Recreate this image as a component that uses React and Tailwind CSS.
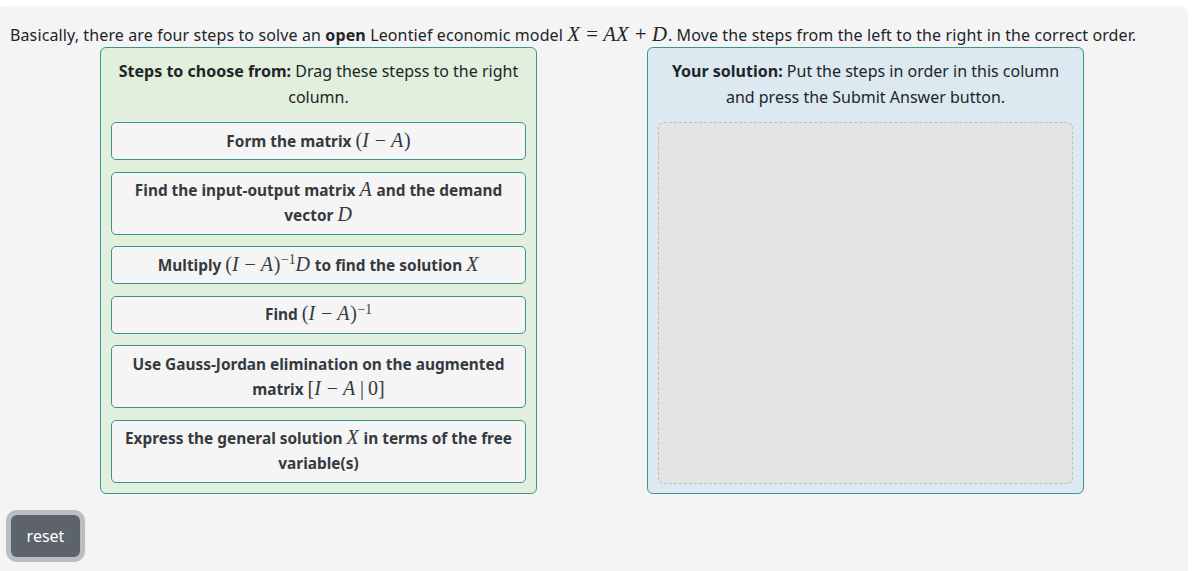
import React from 'react'

const serif = { fontFamily: '"Liberation Serif", "DejaVu Serif", serif' }

// katex-like inline math: italic letters, upright operators
const I = ({ children }) => <i className="italic pr-[0.04em]" style={serif}>{children}</i>
const R = ({ children, className = '' }) => <span className={`not-italic ${className}`} style={serif}>{children}</span>
const Math = ({ children }) => (
  <span className="text-[1.3em] font-normal whitespace-nowrap leading-none" style={serif}>{children}</span>
)
const Op = ({ children }) => <span className="mx-[0.25em]">{children}</span>
const Inv = () => <sup className="text-[0.68em] ml-[0.05em] -top-[0.45em]">−1</sup>

const IminusA = () => (
  <>
    <R>(</R><I>I</I><Op>−</Op><I>A</I><R>)</R>
  </>
)

const steps = [
  { id: 1, body: <>Form the matrix <Math><IminusA /></Math></> },
  { id: 2, body: <>Find the input-output matrix <Math><I>A</I></Math> and the demand vector <Math><I>D</I></Math></> },
  { id: 3, body: <>Multiply <Math><IminusA /><Inv /><I>D</I></Math> to find the solution <Math><I>X</I></Math></> },
  { id: 4, body: <>Find <Math><IminusA /><Inv /></Math></> },
  { id: 5, body: <>Use Gauss-Jordan elimination on the augmented matrix <Math><R>[</R><I>I</I><Op>−</Op><I>A</I><R className="mx-[0.2em]">|</R><R>0</R><R>]</R></Math></> },
  { id: 6, body: <>Express the general solution <Math><I>X</I></Math> in terms of the free variable(s)</> },
]

function StepCard({ children }) {
  return (
    <div className="rounded-[5px] border border-[#3a9592] bg-[#f5f5f5] px-3 py-[5.5px] text-center text-[15.4px] font-bold leading-[25px] text-[#343a40] cursor-move">
      {children}
    </div>
  )
}

export default function App() {
  return (
    <div className="min-h-screen bg-white text-[#212529]" style={{ fontFamily: '"Noto Sans", "Open Sans", sans-serif' }}>
      <div className="mt-[7px] mr-[12px] min-h-[564px] rounded-tr-lg bg-[#f4f4f4] shadow-[0_-1px_2px_rgba(0,0,0,0.04)]">
        <p className="pl-[10px] pt-[16px] text-[16px] leading-[24px] tracking-[0.12px]">
          Basically, there are four steps to solve an <b>open</b> Leontief economic model{' '}
          <Math><I>X</I><Op>=</Op><I>AX</I><Op>+</Op><I>D</I></Math>. Move the steps from the left to the right in the correct order.
        </p>

        <div className="flex gap-[110px] pl-[100px]">
          <div className="w-[437px] rounded-md border border-[#3a9592] bg-[#e2efdc] px-[10px] pt-[10px] pb-[10px]">
            <p className="text-center text-[16px] leading-[26px]">
              <b>Steps to choose from:</b> Drag these stepss to the right column.
            </p>
            <div className="mt-[12px] flex flex-col gap-[11.5px]">
              {steps.map(s => (
                <StepCard key={s.id}>{s.body}</StepCard>
              ))}
            </div>
          </div>

          <div className="flex w-[437px] flex-col rounded-md border border-[#3a9592] bg-[#dce9f0] px-[10px] pt-[10px] pb-[9px]">
            <p className="px-3 text-center text-[16px] leading-[26px]">
              <b>Your solution:</b> Put the steps in order in this column and press the Submit Answer button.
            </p>
            <div className="mt-[12px] flex-1 rounded-md border border-dashed border-[#bdbdbd] bg-[#e4e4e4]" />
          </div>
        </div>

        <div className="pl-[11px] pt-[21px]">
          <button className="h-[42px] w-[69px] rounded-md bg-[#5c636a] text-[16px] text-white ring-[5px] ring-[#babdc1]">
            reset
          </button>
        </div>
      </div>
    </div>
  )
}
